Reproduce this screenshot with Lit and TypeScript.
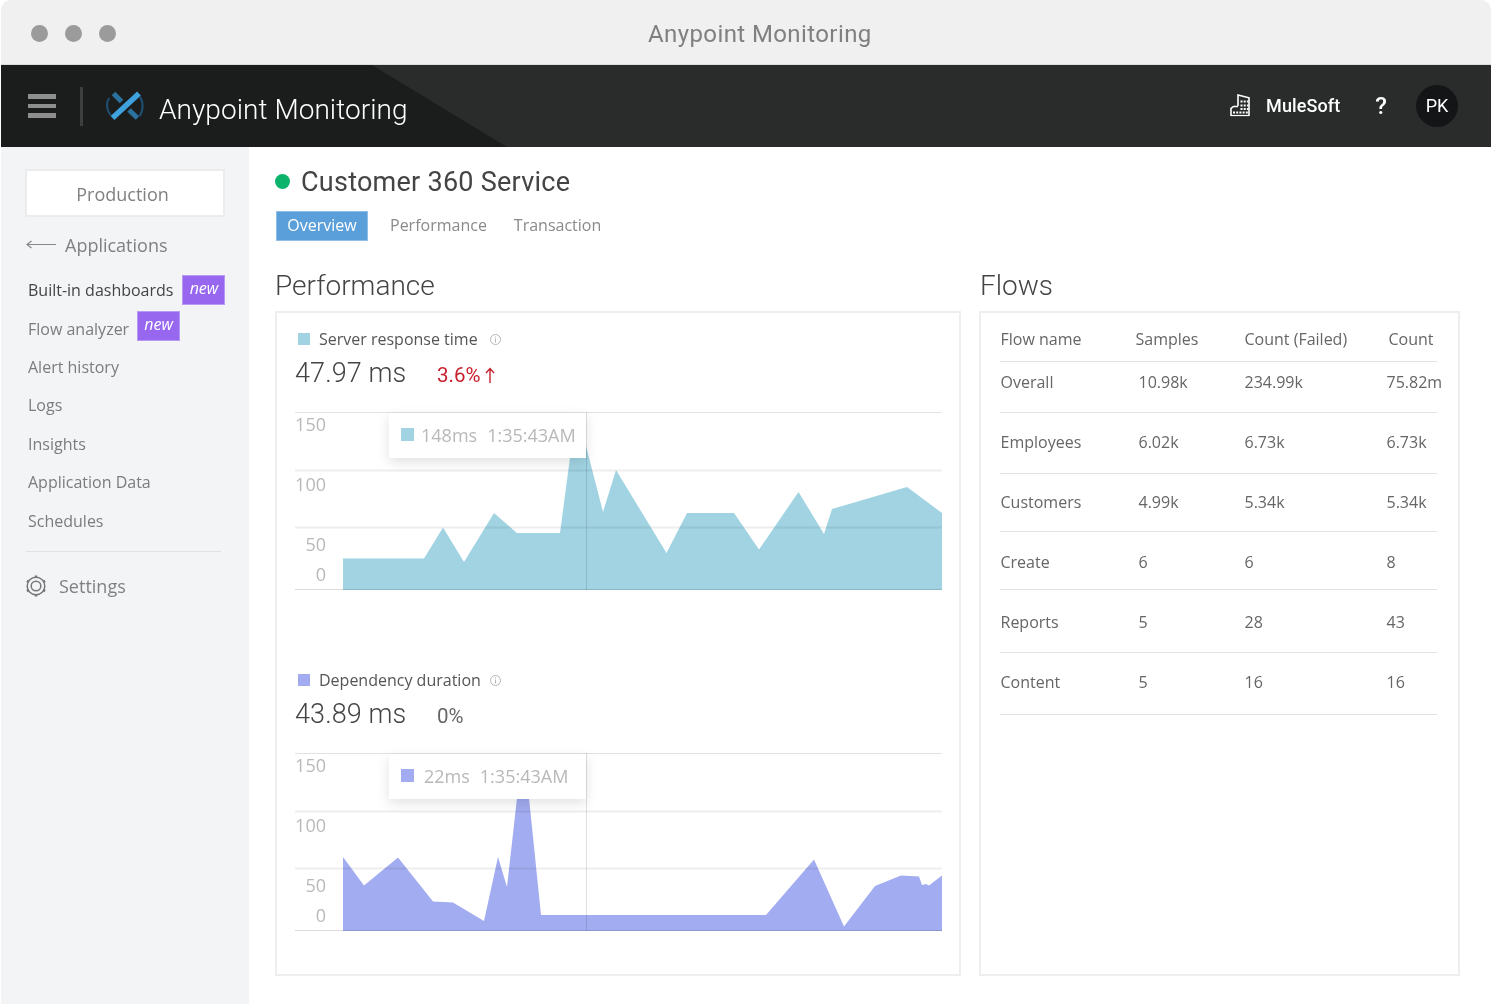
import { LitElement, css, html, svg } from 'lit'
import { customElement, property } from 'lit/decorators.js'

@customElement('metric-chart')
export class MetricChart extends LitElement {
  static styles = css`
    :host {
      display: block;
      height: 341px;
      font-family: "Open Sans", sans-serif;
    }
    .label {
      display: flex;
      align-items: center;
      height: 22px;
      box-sizing: border-box;
      padding: 0 0 2px 3px;
      font-size: 16px;
      color: #555;
    }
    .swatch {
      width: 12px;
      height: 12px;
      margin-right: 9px;
      flex: none;
    }
    .label-text {
      width: 171px;
      flex: none;
    }
    .value {
      display: flex;
      align-items: center;
      height: 36px;
      margin-top: 4px;
    }
    .num {
      width: 142px;
      font-family: Roboto, "Noto Sans", sans-serif;
      font-weight: 300;
      font-size: 27px;
      letter-spacing: 0.1px;
      color: #444;
    }
    .delta {
      display: flex;
      align-items: center;
      gap: 5px;
      font-family: Roboto, "Noto Sans", sans-serif;
      font-size: 20.5px;
      margin-top: 3px;
    }
    .plot {
      position: relative;
      margin-top: 21px;
      width: 648px;
      height: 179px;
    }
    .plot svg {
      display: block;
    }
    .plot text {
      font-family: "Open Sans", sans-serif;
      font-size: 18px;
      fill: #b9b9b9;
      text-anchor: end;
    }
    .tip {
      position: absolute;
      left: 94px;
      top: 1px;
      width: 197px;
      height: 45px;
      box-sizing: border-box;
      padding: 0 0 2px 12px;
      display: flex;
      align-items: center;
      gap: 10px;
      background: #fff;
      box-shadow: 0 4px 12px rgba(0, 0, 0, 0.12);
      font-size: 18px;
      color: #b8b8b8;
      white-space: nowrap;
    }
    .tip .swatch {
      width: 13px;
      height: 13px;
    }
  `

  @property() label = ''
  @property() value = ''
  @property() delta = ''
  @property() deltaColor = '#666'
  @property({ type: Boolean }) up = false
  @property() color = '#a1d3e2'
  @property() tipValue = ''
  @property({ type: Number }) tipGap = 7
  @property({ type: Array }) points: number[][] = []

  render () {
    const gridLines = [
      [0.5, 1, '#e2e2e2'],
      [58.5, 2, '#eeeeee'],
      [115.5, 2, '#eeeeee'],
      [177.5, 1, '#dcdcdc']
    ]
    const labels = [['150', 19], ['100', 79], ['50', 139], ['0', 169]]
    const pts = this.points.map(p => p.join(',')).join(' ')
    return html`
      <div class="label">
        <span class="swatch" style="background:${this.color}"></span>
        <span class="label-text">${this.label}</span>
        <svg width="11" height="11" viewBox="0 0 11 11" fill="none" stroke="#b5b5b5">
          <circle cx="5.5" cy="5.5" r="5"></circle>
          <path d="M5.5 2.5v1M5.5 4.5v4"></path>
        </svg>
      </div>
      <div class="value">
        <span class="num">${this.value}</span>
        <span class="delta" style="color:${this.deltaColor}">
          ${this.delta}
          ${this.up
            ? html`<svg width="10" height="16" viewBox="0 0 10 16" fill="none" stroke="currentColor" stroke-width="1.4">
                <path d="M5 16V1.5M1 6l4-4.5L9 6"></path>
              </svg>`
            : ''}
        </span>
      </div>
      <div class="plot">
        <svg width="648" height="179" viewBox="0 0 648 179">
          <polygon points=${pts} fill=${this.color}></polygon>
          ${gridLines.map(([y, w, c]) => svg`<rect x="0" y=${(y as number) - (w as number) / 2} width="647" height=${w} fill=${c} style="mix-blend-mode:multiply"></rect>`)}
          <rect x="291" y="0" width="1" height="178" fill="#000" opacity="0.12"></rect>
          ${labels.map(([t, y]) => svg`<text x="31" y=${y}>${t}</text>`)}
        </svg>
        <div class="tip">
          <span class="swatch" style="background:${this.color}; margin-right:${this.tipGap - 10}px"></span>
          <span>${this.tipValue}</span>
          <span>1:35:43AM</span>
        </div>
      </div>
    `
  }
}

// chart coordinates are page x - 295, page y - 412 (or 753 for the second one)
const offset = (pts: number[][], top: number) => pts.map(([x, y]) => [x - 295, y - top])

const responsePoints = offset([
  [343, 590], [343, 558.5], [424, 558.5], [443, 527.5], [464, 562], [494, 513], [517, 533],
  [560, 533], [571, 450], [586, 446], [603, 512], [616, 470], [666.5, 553], [687, 513],
  [734, 513], [759, 549.5], [798.5, 492], [824, 534], [832, 509], [907, 487], [942, 513], [942, 590]
], 412)

const dependencyPoints = offset([
  [343, 931], [343, 857], [364, 885.5], [398, 857.5], [433, 901.5], [453, 902.5], [484, 921],
  [498, 857], [507, 887], [517, 798], [522, 775], [529, 798], [541, 915], [766, 915], [814, 859.5],
  [844, 926.5], [875, 886], [901, 875.5], [919, 876.5], [922, 885], [926, 884], [929, 885.5],
  [942, 875.5], [942, 931]
], 753)

const flows = [
  { name: 'Overall', samples: '10.98k', failed: '234.99k', count: '75.82m', h: 51, pt: 0, pb: 10 },
  { name: 'Employees', samples: '6.02k', failed: '6.73k', count: '6.73k', h: 61, pt: 0, pb: 2 },
  { name: 'Customers', samples: '4.99k', failed: '5.34k', count: '5.34k', h: 58, pt: 0, pb: 2 },
  { name: 'Create', samples: '6', failed: '6', count: '8', h: 58, pt: 2, pb: 0 },
  { name: 'Reports', samples: '5', failed: '28', count: '43', h: 63, pt: 2, pb: 0 },
  { name: 'Content', samples: '5', failed: '16', count: '16', h: 62, pt: 0, pb: 4 }
]

@customElement('app-root')
export class AppRoot extends LitElement {
  static styles = css`
    :host {
      display: block;
      width: 1492px;
      height: 1004px;
      overflow: hidden;
      background: #fff;
      font-family: "Open Sans", sans-serif;
    }
    .window {
      margin-left: 1px;
      width: 1490px;
      height: 1004px;
      display: flex;
      flex-direction: column;
    }
    .titlebar {
      flex: none;
      height: 65px;
      box-sizing: border-box;
      background: #f0f0f0;
      border-bottom: 1px solid #dcdcdc;
      border-radius: 10px 10px 0 0;
      display: flex;
      align-items: center;
      padding: 3px 0 0 29.5px;
      gap: 17px;
    }
    .dot {
      width: 17px;
      height: 17px;
      border-radius: 50%;
      background: #9b9b9b;
    }
    .titlebar .name {
      margin-left: 515.500px;
      font-family: Roboto, "Noto Sans", sans-serif;
      font-size: 24px;
      letter-spacing: 0.4px;
      color: #808080;
      white-space: nowrap;
    }
    header {
      flex: none;
      position: relative;
      height: 82px;
      background: #2a2c2c;
      display: flex;
      align-items: center;
      color: #fff;
    }
    header::before {
      content: "";
      position: absolute;
      left: 0;
      top: 0;
      width: 506px;
      height: 82px;
      background: #1b1d1d;
      clip-path: polygon(0 0, 371px 0, 506px 82px, 0 82px);
    }
    header > * {
      position: relative;
    }
    .burger {
      margin-left: 27px;
      width: 28px;
      display: flex;
      flex-direction: column;
      gap: 5px;
    }
    .burger span {
      height: 4.5px;
      background: #8e8e8e;
    }
    .sep {
      margin-left: 24px;
      width: 3px;
      height: 39px;
      background: #3d3f3f;
    }
    .logo {
      margin-left: 23px;
    }
    .brand {
      margin-left: 15px;
      font-family: Roboto, "Noto Sans", sans-serif;
      font-weight: 300;
      font-size: 28px;
      letter-spacing: 0.05px;
      margin-top: 6px;
    }
    .right {
      margin-left: auto;
      display: flex;
      align-items: center;
      padding-right: 33px;
    }
    .org {
      margin-left: 15px;
      margin-bottom: 2px;
      font-family: Roboto, "Noto Sans", sans-serif;
      font-weight: 500;
      font-size: 18px;
      letter-spacing: 0.1px;
    }
    .help {
      margin-left: 35px;
      font-family: Roboto, "Noto Sans", sans-serif;
      font-weight: 500;
      font-size: 24px;
    }
    .avatar {
      margin-left: 29px;
      width: 42px;
      height: 42px;
      box-sizing: border-box;
      padding-bottom: 2px;
      border-radius: 50%;
      background: #131516;
      display: flex;
      align-items: center;
      justify-content: center;
      font-family: Roboto, "Noto Sans", sans-serif;
      font-size: 18px;
    }
    .body {
      flex: 1;
      display: flex;
      min-height: 0;
    }
    aside {
      flex: none;
      width: 248px;
      background: #f3f4f6;
      padding-top: 22px;
      box-sizing: border-box;
    }
    .env {
      margin-left: 24px;
      width: 200px;
      height: 48px;
      box-sizing: border-box;
      padding: 2px 5px 0 0;
      background: #fff;
      border: 2px solid #ebecee;
      display: flex;
      align-items: center;
      justify-content: center;
      font-size: 18px;
      color: #808080;
    }
    .back {
      display: flex;
      align-items: center;
      height: 30px;
      margin-top: 13px;
      margin-left: 25px;
      font-size: 18px;
      color: #808080;
    }
    .back svg {
      margin-right: 9px;
    }
    nav {
      margin-top: 11px;
    }
    .item {
      display: flex;
      align-items: center;
      height: 38.4px;
      padding-left: 27px;
      font-size: 16px;
      color: #7c7c7c;
    }
    .item.active {
      color: #444;
    }
    .badge {
      margin-left: 9px;
      width: 43px;
      height: 30px;
      box-sizing: border-box;
      background: #9768ef;
      border: 1px solid #b79bf3;
      color: #fff;
      font-style: italic;
      font-size: 16px;
      display: flex;
      align-items: center;
      justify-content: center;
      padding-bottom: 4px;
    }
    .badge.raised {
      margin-left: 8px;
      margin-bottom: 5px;
    }
    .rule {
      margin: 11px 0 0 25px;
      width: 195px;
      height: 1px;
      background: #e0e1e3;
    }
    .settings {
      display: flex;
      align-items: center;
      height: 30px;
      margin-top: 19px;
      margin-left: 23px;
      font-size: 18px;
      color: #808080;
    }
    .settings svg {
      margin-right: 11px;
    }
    main {
      flex: 1;
      padding: 18px 0 0 26px;
      min-width: 0;
    }
    .service {
      display: flex;
      align-items: center;
      height: 32px;
      color: #444;
    }
    .status {
      width: 15px;
      height: 15px;
      border-radius: 50%;
      background: #0cb46b;
      margin-right: 11px;
    }
    h1, h2 {
      margin: 0;
      font-family: Roboto, "Noto Sans", sans-serif;
    }
    h1 {
      font-weight: 400;
      font-size: 27px;
      letter-spacing: 0.25px;
      padding-top: 1px;
    }
    .tabs {
      display: flex;
      align-items: center;
      height: 30px;
      margin-top: 14px;
      margin-left: 1px;
      font-size: 16px;
      color: #8a8a8a;
    }
    .tab {
      margin-right: 27px;
      padding-bottom: 2px;
    }
    .tab.on {
      width: 92px;
      height: 30px;
      margin-right: 22px;
      box-sizing: border-box;
      background: #5a9fd9;
      border: 1px solid #8fbfe6;
      color: #fff;
      display: flex;
      align-items: center;
      justify-content: center;
    }
    .columns {
      display: flex;
      gap: 18px;
      margin-top: 26px;
    }
    h2 {
      height: 38px;
      line-height: 38px;
      margin-bottom: 6px;
      font-weight: 300;
      font-size: 28px;
      color: #444;
    }
    .panel {
      height: 665px;
      box-sizing: border-box;
      border: 2px solid #eeeeee;
      padding: 16px 18px 0;
    }
    .perf {
      width: 686px;
    }
    .flows {
      width: 481px;
    }
    .flows h2 {
      margin-left: 1px;
    }
    .flows .panel {
      padding: 16px 21px 0 19px;
    }
    .tr {
      display: grid;
      grid-template-columns: 135px 109px 144px 1fr;
      align-items: center;
      border-bottom: 1px solid #e2e2e2;
      box-sizing: border-box;
      padding-left: 0.5px;
      font-size: 16px;
      color: #666;
      white-space: nowrap;
    }
    .tr.head {
      height: 33px;
      align-items: start;
      line-height: 20px;
    }
    .samples {
      padding-left: 3px;
    }
    .last {
      margin-left: -2px;
    }
  `

  render () {
    return html`
      <div class="window">
        <div class="titlebar">
          <span class="dot"></span><span class="dot"></span><span class="dot"></span>
          <span class="name">Anypoint Monitoring</span>
        </div>
        <header>
          <div class="burger"><span></span><span></span><span></span></div>
          <div class="sep"></div>
          <svg class="logo" width="38" height="32" viewBox="105 90 38 32" fill="none">
            <path d="M108 98C105 103 105.500 110 109.500 115M139 97C142.500 102 142.500 111 138.500 116" stroke="#1f4d6e" stroke-width="2.200"></path>
            <path d="M112.500 93.500L120.500 101.500M128 110L136.500 118" stroke="#2b729f" stroke-width="5"></path>
            <path d="M111.500 118L138 93.500" stroke="#3fa1de" stroke-width="5.500"></path>
          </svg>
          <span class="brand">Anypoint Monitoring</span>
          <div class="right">
            <svg width="22" height="24" viewBox="1229 92 22 24" fill="none" stroke="#fff">
              <path d="M1231 114V106.500L1233.500 104.500H1238M1238 104V93L1249 95.800V114" stroke-width="1.600"></path>
              <path d="M1231 113.500H1249" stroke-width="1.200"></path>
              <path d="M1240.500 99.500h8M1240.500 103.500h8M1240.500 107h8M1233 110.500h15" stroke-width="2" stroke-dasharray="2 1.200"></path>
            </svg>
            <span class="org">MuleSoft</span>
            <span class="help">?</span>
            <div class="avatar">PK</div>
          </div>
        </header>
        <div class="body">
          <aside>
            <div class="env">Production</div>
            <div class="back">
              <svg width="30" height="10" viewBox="0 0 30 10" fill="none" stroke="#888" stroke-width="1.200">
                <path d="M30 4.500H1M5.500 1L1 4.500L5.500 8"></path>
              </svg>
              Applications
            </div>
            <nav>
              <div class="item active">Built-in dashboards<span class="badge">new</span></div>
              <div class="item">Flow analyzer<span class="badge raised">new</span></div>
              <div class="item">Alert history</div>
              <div class="item">Logs</div>
              <div class="item">Insights</div>
              <div class="item">Application Data</div>
              <div class="item">Schedules</div>
            </nav>
            <div class="rule"></div>
            <div class="settings">
              <svg width="24" height="24" viewBox="0 0 24 24" fill="none" stroke="#777">
                <circle cx="12" cy="12" r="4.800" stroke-width="1.500"></circle>
                <circle cx="12" cy="12" r="8.800" stroke-width="1.500"></circle>
                <path d="M12 1.500V3.500M12 20.500V22.500M2.900 6.800L4.700 7.800M19.300 16.200L21.100 17.200M2.900 17.200L4.700 16.200M19.300 7.800L21.100 6.800" stroke-width="2.600"></path>
              </svg>
              Settings
            </div>
          </aside>
          <main>
            <div class="service">
              <span class="status"></span>
              <h1>Customer 360 Service</h1>
            </div>
            <div class="tabs">
              <span class="tab on">Overview</span>
              <span class="tab">Performance</span>
              <span class="tab">Transaction</span>
            </div>
            <div class="columns">
              <section class="perf">
                <h2>Performance</h2>
                <div class="panel">
                  <metric-chart
                    label="Server response time"
                    value="47.97 ms"
                    delta="3.6%"
                    deltaColor="#c9202f"
                    up
                    color="#a1d3e2"
                    tipValue="148ms"
                    .points=${responsePoints}
                  ></metric-chart>
                  <metric-chart
                    label="Dependency duration"
                    value="43.89 ms"
                    delta="0%"
                    color="#a2acf0"
                    tipValue="22ms"
                    .tipGap=${10}
                    .points=${dependencyPoints}
                  ></metric-chart>
                </div>
              </section>
              <section class="flows">
                <h2>Flows</h2>
                <div class="panel">
                  <div class="tr head">
                    <span>Flow name</span><span>Samples</span><span>Count (Failed)</span><span>Count</span>
                  </div>
                  ${flows.map(f => html`
                    <div class="tr" style="height:${f.h}px; padding-top:${f.pt}px; padding-bottom:${f.pb}px">
                      <span>${f.name}</span>
                      <span class="samples">${f.samples}</span>
                      <span>${f.failed}</span>
                      <span class="last">${f.count}</span>
                    </div>
                  `)}
                </div>
              </section>
            </div>
          </main>
        </div>
      </div>
    `
  }
}
